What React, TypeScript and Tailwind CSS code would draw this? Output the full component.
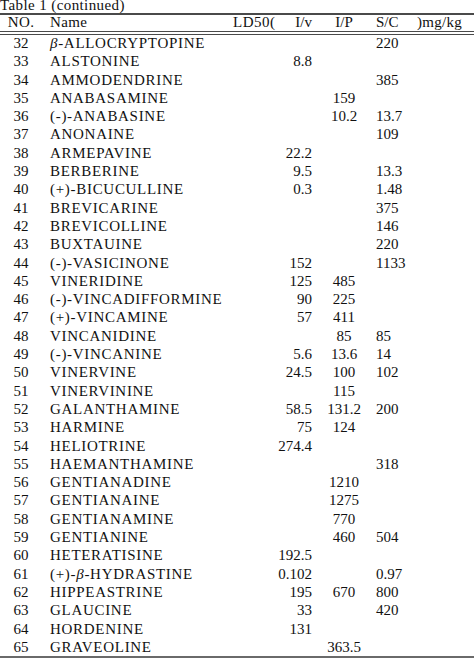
type Row = {
  no: number;
  name: React.ReactNode;
  iv?: string;
  ip?: string;
  sc?: string;
};

const Beta = () => <i className="italic">β</i>;

const rows: Row[] = [
  { no: 32, name: <><Beta />-ALLOCRYPTOPINE</>, sc: '220' },
  { no: 33, name: 'ALSTONINE', iv: '8.8' },
  { no: 34, name: 'AMMODENDRINE', sc: '385' },
  { no: 35, name: 'ANABASAMINE', ip: '159' },
  { no: 36, name: '(-)-ANABASINE', ip: '10.2', sc: '13.7' },
  { no: 37, name: 'ANONAINE', sc: '109' },
  { no: 38, name: 'ARMEPAVINE', iv: '22.2' },
  { no: 39, name: 'BERBERINE', iv: '9.5', sc: '13.3' },
  { no: 40, name: '(+)-BICUCULLINE', iv: '0.3', sc: '1.48' },
  { no: 41, name: 'BREVICARINE', sc: '375' },
  { no: 42, name: 'BREVICOLLINE', sc: '146' },
  { no: 43, name: 'BUXTAUINE', sc: '220' },
  { no: 44, name: '(-)-VASICINONE', iv: '152', sc: '1133' },
  { no: 45, name: 'VINERIDINE', iv: '125', ip: '485' },
  { no: 46, name: '(-)-VINCADIFFORMINE', iv: '90', ip: '225' },
  { no: 47, name: '(+)-VINCAMINE', iv: '57', ip: '411' },
  { no: 48, name: 'VINCANIDINE', ip: '85', sc: '85' },
  { no: 49, name: '(-)-VINCANINE', iv: '5.6', ip: '13.6', sc: '14' },
  { no: 50, name: 'VINERVINE', iv: '24.5', ip: '100', sc: '102' },
  { no: 51, name: 'VINERVININE', ip: '115' },
  { no: 52, name: 'GALANTHAMINE', iv: '58.5', ip: '131.2', sc: '200' },
  { no: 53, name: 'HARMINE', iv: '75', ip: '124' },
  { no: 54, name: 'HELIOTRINE', iv: '274.4' },
  { no: 55, name: 'HAEMANTHAMINE', sc: '318' },
  { no: 56, name: 'GENTIANADINE', ip: '1210' },
  { no: 57, name: 'GENTIANAINE', ip: '1275' },
  { no: 58, name: 'GENTIANAMINE', ip: '770' },
  { no: 59, name: 'GENTIANINE', ip: '460', sc: '504' },
  { no: 60, name: 'HETERATISINE', iv: '192.5' },
  { no: 61, name: <>(+)-<Beta />-HYDRASTINE</>, iv: '0.102', sc: '0.97' },
  { no: 62, name: 'HIPPEASTRINE', iv: '195', ip: '670', sc: '800' },
  { no: 63, name: 'GLAUCINE', iv: '33', sc: '420' },
  { no: 64, name: 'HORDENINE', iv: '131' },
  { no: 65, name: 'GRAVEOLINE', ip: '363.5' },
];

const App = () => {
  return (
    <div
      className="flex flex-col w-[474px] h-[660px] overflow-hidden bg-white text-[#111] text-[15px]"
      style={{ fontFamily: '"Liberation Serif", "Times New Roman", serif' }}
    >
      {/* caption, top is cut off in the scan */}
      <div className="flex flex-col h-[13px] shrink-0">
        <div className="-mt-[2px] leading-[14px] tracking-[0.4px]">Table 1 (continued)</div>
      </div>
      <div className="h-[2px] shrink-0 bg-[#4a4a4a]" />

      {/* header */}
      <div className="flex h-[16px] shrink-0 leading-[14px]">
        <div className="w-[42px] text-center tracking-[0.4px]">NO.</div>
        <div className="w-[191px] pl-[8px] tracking-[0.4px]">Name</div>
        <div className="w-[45px] tracking-[0.5px]">LD50(</div>
        <div className="w-[34px] text-right">I/v</div>
        <div className="w-[64px] text-center">I/P</div>
        <div className="w-[41px]">S/C</div>
        <div className="flex-1 tracking-[0.3px]">)mg/kg</div>
      </div>
      <div className="h-[4px] shrink-0 border-y border-[#4a4a4a]" />

      {/* body */}
      <div className="flex flex-col shrink-0">
        {rows.map((r) => (
          <div key={r.no} className="flex h-[18.3px] leading-[17.5px]">
            <div className="w-[42px] text-center">{r.no}</div>
            <div className="w-[191px] pl-[8px] tracking-[0.7px] whitespace-nowrap">{r.name}</div>
            <div className="w-[45px]" />
            <div className="w-[34px] text-right">{r.iv}</div>
            <div className="w-[64px] text-center">{r.ip}</div>
            <div className="w-[41px]">{r.sc}</div>
            <div className="flex-1" />
          </div>
        ))}
      </div>
      <div className="-mt-[1px] h-[2px] shrink-0 bg-[#6a6a6a]" />
    </div>
  );
};

export default App;
